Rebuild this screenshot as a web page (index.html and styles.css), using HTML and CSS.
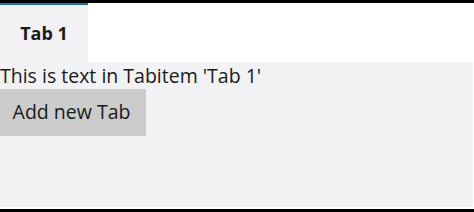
FILE: index.html
```html
<!DOCTYPE html>
<html lang="en">
<head>
    <meta charset="UTF-8">
    <meta name="viewport" content="width=device-width, initial-scale=1.0">
    <title>Tab Control</title>
    <link rel="stylesheet" href="styles.css">
</head>
<body>

    <div class="window">
        <!-- Tab header strip -->
        <div class="tab-strip">
            <div class="tab active">Tab 1</div>
        </div>

        <!-- Selected tab content -->
        <div class="tab-content">
            <p class="tab-text">This is text in Tabitem 'Tab 1'</p>
            <button class="add-btn">Add new Tab</button>
        </div>
    </div>

</body>
</html>
```

FILE: styles.css
```css
html, body {
    margin: 0;
    height: 100%;
}

body {
    background-color: #000;
    font-family: "Open Sans", "Noto Sans", sans-serif;
    color: #1a1a1a;
}

.window {
    margin-top: 3px;
    height: 206px;
    background-color: #fff;
    display: flex;
    flex-direction: column;
}

/* Tab strip */
.tab-strip {
    display: flex;
    height: 59px;
}

.tab {
    width: 88px;
    display: flex;
    align-items: center;
    justify-content: center;
    font-size: 18px;
    font-weight: bold;
    background-color: #f2f2f4;
    border-top: 2px solid #1f6cb6;
    box-sizing: border-box;
    padding-bottom: 2px;
}

/* Content */
.tab-content {
    height: 145px;
    margin-right: 1px;
    background-color: #f2f2f4;
    display: flex;
    flex-direction: column;
    align-items: flex-start;
}

.tab-text {
    margin: 0;
    font-size: 19.5px;
    line-height: 27px;
}

.add-btn {
    font-family: inherit;
    font-size: 19.5px;
    color: #1a1a1a;
    background-color: #cccccc;
    border: none;
    height: 47px;
    width: 146px;
    padding: 0 3px 2px 0;
}
```
